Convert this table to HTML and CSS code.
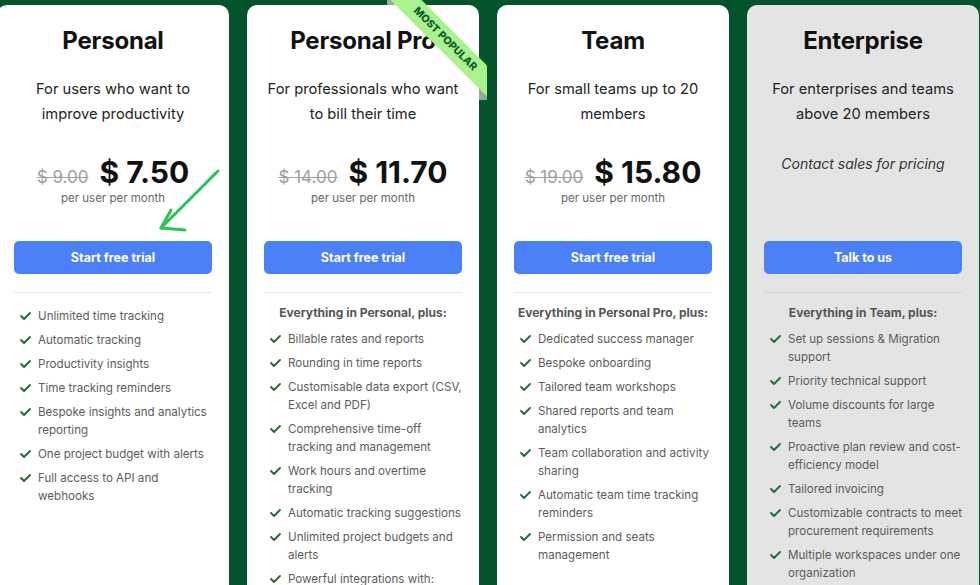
FILE: index.html
```html
<!DOCTYPE html>
<html lang="en">
<head>
<meta charset="utf-8">
<title>Pricing plans</title>
<link rel="stylesheet" href="styles.css">
</head>
<body>
<div class="page">
  <div class="plans">
    <section class="card">
      <h2 class="title">Personal</h2>
      <p class="desc">For users who want to improve productivity</p>
      <div class="price">
        <div class="price-row"><span class="old">$ 9.00</span><span class="new">$ 7.50</span></div>
        <div class="per">per user per month</div>
      </div>
      <a class="btn" href="#">Start free trial</a>
      <hr class="sep">
      <ul class="features features--top">
        <li class="feature"><svg class="check" viewBox="0 0 11 8"><polyline points="1,4 4,7 10,1"/></svg><span>Unlimited time tracking</span></li>
        <li class="feature"><svg class="check" viewBox="0 0 11 8"><polyline points="1,4 4,7 10,1"/></svg><span>Automatic tracking</span></li>
        <li class="feature"><svg class="check" viewBox="0 0 11 8"><polyline points="1,4 4,7 10,1"/></svg><span>Productivity insights</span></li>
        <li class="feature"><svg class="check" viewBox="0 0 11 8"><polyline points="1,4 4,7 10,1"/></svg><span>Time tracking reminders</span></li>
        <li class="feature"><svg class="check" viewBox="0 0 11 8"><polyline points="1,4 4,7 10,1"/></svg><span>Bespoke insights and analytics reporting</span></li>
        <li class="feature"><svg class="check" viewBox="0 0 11 8"><polyline points="1,4 4,7 10,1"/></svg><span>One project budget with alerts</span></li>
        <li class="feature"><svg class="check" viewBox="0 0 11 8"><polyline points="1,4 4,7 10,1"/></svg><span>Full access to API and webhooks</span></li>
      </ul>
      <svg class="arrow" viewBox="0 0 75 75">
        <path d="M68 6 C 56 18, 36 38, 12 62"/>
        <path class="arrow-thin" d="M65 8 C 53 21, 35 40, 13 60"/>
        <path d="M11 63 L 21 45"/>
        <path d="M11 63 L 35 65"/>
      </svg>
    </section>

    <section class="card">
      <div class="ribbon"><span class="ribbon-band">MOST POPULAR</span></div>
      <h2 class="title">Personal Pro</h2>
      <p class="desc">For professionals who want to bill their time</p>
      <div class="price">
        <div class="price-row"><span class="old">$ 14.00</span><span class="new">$ 11.70</span></div>
        <div class="per">per user per month</div>
      </div>
      <a class="btn" href="#">Start free trial</a>
      <hr class="sep">
      <h3 class="group-title">Everything in Personal, plus:</h3>
      <ul class="features">
        <li class="feature"><svg class="check" viewBox="0 0 11 8"><polyline points="1,4 4,7 10,1"/></svg><span>Billable rates and reports</span></li>
        <li class="feature"><svg class="check" viewBox="0 0 11 8"><polyline points="1,4 4,7 10,1"/></svg><span>Rounding in time reports</span></li>
        <li class="feature"><svg class="check" viewBox="0 0 11 8"><polyline points="1,4 4,7 10,1"/></svg><span>Customisable data export (CSV, Excel and PDF)</span></li>
        <li class="feature"><svg class="check" viewBox="0 0 11 8"><polyline points="1,4 4,7 10,1"/></svg><span>Comprehensive time-off tracking and management</span></li>
        <li class="feature"><svg class="check" viewBox="0 0 11 8"><polyline points="1,4 4,7 10,1"/></svg><span>Work hours and overtime tracking</span></li>
        <li class="feature"><svg class="check" viewBox="0 0 11 8"><polyline points="1,4 4,7 10,1"/></svg><span>Automatic tracking suggestions</span></li>
        <li class="feature"><svg class="check" viewBox="0 0 11 8"><polyline points="1,4 4,7 10,1"/></svg><span>Unlimited project budgets and alerts</span></li>
        <li class="feature"><svg class="check" viewBox="0 0 11 8"><polyline points="1,4 4,7 10,1"/></svg><span>Powerful integrations with:</span></li>
      </ul>
    </section>

    <section class="card">
      <h2 class="title">Team</h2>
      <p class="desc">For small teams up to 20 members</p>
      <div class="price">
        <div class="price-row"><span class="old">$ 19.00</span><span class="new">$ 15.80</span></div>
        <div class="per">per user per month</div>
      </div>
      <a class="btn" href="#">Start free trial</a>
      <hr class="sep">
      <h3 class="group-title">Everything in Personal Pro, plus:</h3>
      <ul class="features">
        <li class="feature"><svg class="check" viewBox="0 0 11 8"><polyline points="1,4 4,7 10,1"/></svg><span>Dedicated success manager</span></li>
        <li class="feature"><svg class="check" viewBox="0 0 11 8"><polyline points="1,4 4,7 10,1"/></svg><span>Bespoke onboarding</span></li>
        <li class="feature"><svg class="check" viewBox="0 0 11 8"><polyline points="1,4 4,7 10,1"/></svg><span>Tailored team workshops</span></li>
        <li class="feature"><svg class="check" viewBox="0 0 11 8"><polyline points="1,4 4,7 10,1"/></svg><span>Shared reports and team analytics</span></li>
        <li class="feature"><svg class="check" viewBox="0 0 11 8"><polyline points="1,4 4,7 10,1"/></svg><span>Team collaboration and activity sharing</span></li>
        <li class="feature"><svg class="check" viewBox="0 0 11 8"><polyline points="1,4 4,7 10,1"/></svg><span>Automatic team time tracking reminders</span></li>
        <li class="feature"><svg class="check" viewBox="0 0 11 8"><polyline points="1,4 4,7 10,1"/></svg><span>Permission and seats management</span></li>
      </ul>
    </section>

    <section class="card card--muted">
      <h2 class="title">Enterprise</h2>
      <p class="desc">For enterprises and teams above 20 members</p>
      <div class="price">
        <p class="contact">Contact sales for pricing</p>
      </div>
      <a class="btn" href="#">Talk to us</a>
      <hr class="sep">
      <h3 class="group-title">Everything in Team, plus:</h3>
      <ul class="features">
        <li class="feature"><svg class="check" viewBox="0 0 11 8"><polyline points="1,4 4,7 10,1"/></svg><span>Set up sessions &amp; Migration support</span></li>
        <li class="feature"><svg class="check" viewBox="0 0 11 8"><polyline points="1,4 4,7 10,1"/></svg><span>Priority technical support</span></li>
        <li class="feature"><svg class="check" viewBox="0 0 11 8"><polyline points="1,4 4,7 10,1"/></svg><span>Volume discounts for large teams</span></li>
        <li class="feature"><svg class="check" viewBox="0 0 11 8"><polyline points="1,4 4,7 10,1"/></svg><span>Proactive plan review and cost-efficiency model</span></li>
        <li class="feature"><svg class="check" viewBox="0 0 11 8"><polyline points="1,4 4,7 10,1"/></svg><span>Tailored invoicing</span></li>
        <li class="feature"><svg class="check" viewBox="0 0 11 8"><polyline points="1,4 4,7 10,1"/></svg><span>Customizable contracts to meet procurement requirements</span></li>
        <li class="feature"><svg class="check" viewBox="0 0 11 8"><polyline points="1,4 4,7 10,1"/></svg><span>Multiple workspaces under one organization</span></li>
      </ul>
    </section>
  </div>
</div>
</body>
</html>
```

FILE: styles.css
```css
* { box-sizing: border-box; }

html, body {
  margin: 0;
  height: 100%;
  overflow: hidden;
  background: #04532a;
}

body {
  font-family: Inter, "Liberation Sans", sans-serif;
  color: #1a1a1a;
}

.page {
  height: 585px;
  overflow: hidden;
  padding-top: 5px;
}

.plans {
  display: flex;
  gap: 18px;
  margin-left: -3px;
  align-items: stretch;
}

.card {
  position: relative;
  flex: 0 0 232px;
  min-height: 700px;
  background: #ffffff;
  border-radius: 10px;
  padding: 21px 17px 40px;
}

.card--muted { background: #e4e4e4; }

.title {
  margin: 0;
  font-size: 24px;
  line-height: 30px;
  font-weight: 700;
  text-align: center;
  color: #111;
  letter-spacing: -0.2px;
}

.desc {
  margin: 20.5px 0 0;
  height: 50px;
  font-size: 14.7px;
  line-height: 25px;
  text-align: center;
  color: #222;
}

.price {
  display: flex;
  flex-direction: column;
  margin-top: 29.5px;
  height: 48px;
  text-align: center;
}

.price-row {
  display: flex;
  justify-content: center;
  align-items: baseline;
  gap: 11px;
  line-height: 32px;
}

.old {
  font-size: 17px;
  color: #a0a0a0;
  text-decoration: line-through;
}

.new {
  font-size: 30px;
  font-weight: 700;
  color: #111;
}

.per {
  margin-top: -3px;
  font-size: 11.5px;
  line-height: 16px;
  color: #666;
}

.contact {
  margin: -2px 0 0;
  font-style: italic;
  font-size: 14px;
  line-height: 20px;
  color: #333;
}

.btn {
  display: block;
  margin-top: 37px;
  height: 33px;
  line-height: 33px;
  background: #4c80f6;
  color: #fff;
  border-radius: 5px;
  text-align: center;
  font-weight: 700;
  font-size: 12.5px;
  text-decoration: none;
}

.sep {
  margin: 18px 0 0;
  height: 0;
  border: 0;
  border-top: 1px solid #e6e6e6;
}

.card--muted .sep { border-top-color: #d4d4d4; }

.group-title {
  margin: 11px 0 8px;
  text-align: center;
  font-size: 12px;
  line-height: 18px;
  font-weight: 700;
  color: #555;
}

.features {
  list-style: none;
  margin: 0 -4px 0 0;
  padding: 0;
  display: flex;
  flex-direction: column;
  gap: 6px;
}

.features--top { margin-top: 14px; }

.feature {
  display: flex;
  align-items: flex-start;
  font-size: 11.6px;
  line-height: 18px;
  color: #5c5c5c;
}

.check {
  flex: 0 0 auto;
  width: 11px;
  height: 8px;
  margin: 5px 7px 0 6px;
  fill: none;
  stroke: #1e6b37;
  stroke-width: 1.8;
  stroke-linecap: round;
  stroke-linejoin: round;
}

.arrow {
  position: absolute;
  left: 153px;
  top: 160px;
  width: 75px;
  height: 75px;
  fill: none;
  stroke: #2cc257;
  stroke-width: 3;
  stroke-linecap: round;
  stroke-linejoin: round;
}

.arrow .arrow-thin { stroke-width: 1.5; }

.ribbon {
  position: absolute;
  top: -5px;
  right: -8px;
  width: 100px;
  height: 100px;
  overflow: hidden;
  z-index: 2;
}

.ribbon::before,
.ribbon::after {
  content: "";
  position: absolute;
  background: #8fae95;
}

.ribbon::before {
  left: 0;
  top: 0;
  width: 9px;
  height: 5px;
}

.ribbon::after {
  right: 0;
  bottom: 0;
  width: 8px;
  height: 12px;
}

.ribbon-band {
  position: absolute;
  left: -17px;
  top: 28px;
  width: 150px;
  height: 22px;
  line-height: 22px;
  background: #a9f28d;
  color: #0d5a2e;
  font-size: 10.5px;
  font-weight: 800;
  text-align: center;
  transform: rotate(45deg);
  z-index: 1;
}
```
